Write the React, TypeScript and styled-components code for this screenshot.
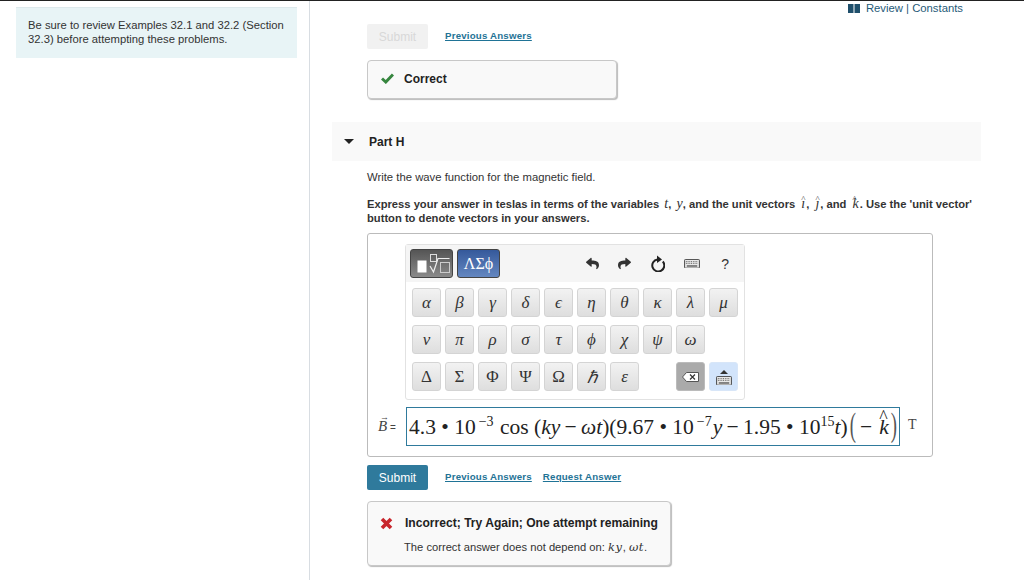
import styled, { createGlobalStyle } from 'styled-components';
import { FaReply, FaShare } from 'react-icons/fa';

const GlobalStyle = createGlobalStyle`
  html, body {
    margin: 0;
    padding: 0;
    background: #fff;
    font-family: "Liberation Sans", Arial, sans-serif;
    color: #222;
  }
  * { box-sizing: border-box; }
`;

const row1 = ['α', 'β', 'γ', 'δ', 'ϵ', 'η', 'θ', 'κ', 'λ', 'μ'];
const row2 = ['ν', 'π', 'ρ', 'σ', 'τ', 'ϕ', 'χ', 'ψ', 'ω'];
const row3 = ['Δ', 'Σ', 'Φ', 'Ψ', 'Ω', 'ℏ', 'ε'];

function KeyboardIcon({ width = 16 }: { width?: number }) {
  return (
    <svg width={width} height={width * 0.6} viewBox="0 0 18 11">
      <rect x="0.5" y="0.5" width="17" height="10" rx="1" fill="#e8e8e8" stroke="#333" />
      <path d="M2 3h14M2 5h14" stroke="#444" strokeWidth="1" strokeDasharray="1 1" />
      <path d="M3 8h12" stroke="#444" strokeWidth="1.4" />
    </svg>
  );
}

function BookIcon() {
  return (
    <svg width="12" height="9" viewBox="0 0 12 9">
      <path d="M0 0h5.5v9H0zM6.5 0H12v9H6.5z" fill="#1f4f6b" />
    </svg>
  );
}

function TemplateIcon() {
  return (
    <svg width="40" height="26" viewBox="0 0 40 26">
      <rect x="5.5" y="9.5" width="9" height="12" fill="#fff" />
      <rect x="18.5" y="3.5" width="6" height="7" fill="none" stroke="#ddd" />
      <path d="M18 15l3.5 6 4.5-13.5h11.5" fill="none" stroke="#eee" strokeWidth="1.2" />
      <rect x="28.5" y="11.5" width="9" height="10" fill="none" stroke="#ccc" />
    </svg>
  );
}

function RefreshIcon() {
  return (
    <svg width="15" height="17" viewBox="0 0 15 17">
      <path d="M12.8 6.5A6 6 0 1 1 7.5 4.5" fill="none" stroke="#222" strokeWidth="2" />
      <path d="M7 0.5L12 4.5L7 8z" fill="#222" />
    </svg>
  );
}

function CheckIcon() {
  return (
    <svg width="13" height="11" viewBox="0 0 13 11">
      <path d="M1 5.5L4.8 9L12 1.5" fill="none" stroke="#36863f" strokeWidth="3" />
    </svg>
  );
}

function CrossIcon() {
  return (
    <svg width="13" height="13" viewBox="0 0 13 13">
      <path d="M2 2L11 11M11 2L2 11" fill="none" stroke="#c8262c" strokeWidth="3.6" />
    </svg>
  );
}

export default function App() {
  return (
    <>
      <GlobalStyle />
      <Page>
        <Sidebar>
          <Note>
            <div>Be sure to review Examples 32.1 and 32.2 (Section</div>
            <div>32.3) before attempting these problems.</div>
          </Note>
        </Sidebar>
        <Main>
          <ReviewBar>
            <BookIcon />
            <span>Review | Constants</span>
          </ReviewBar>
          <Indented>
            <ActionRow>
              <SubmitButton disabled>Submit</SubmitButton>
              <ActionLink href="#">Previous Answers</ActionLink>
            </ActionRow>
            <CorrectBox>
              <CheckIcon />
              <span>Correct</span>
            </CorrectBox>
          </Indented>
          <PartHeader>
            <Caret />
            <span>Part H</span>
          </PartHeader>
          <Indented>
            <Question>Write the wave function for the magnetic field.</Question>
            <Instructions>
              <div>
                Express your answer in teslas in terms of the variables <Var>t</Var>, <Var>y</Var>, and the unit vectors{' '}
                <HatVar>ı</HatVar>, <HatVar>ȷ</HatVar>, and <HatVar>k</HatVar>. Use the 'unit vector'
              </div>
              <div>button to denote vectors in your answers.</div>
            </Instructions>
            <AnswerBox>
              <Palette>
                <PaletteBar>
                  <ModeGroup>
                    <ModeButton $kind="template"><TemplateIcon /></ModeButton>
                    <ModeButton $kind="symbols">ΛΣϕ</ModeButton>
                  </ModeGroup>
                  <ToolGroup>
                    <FaReply size={13} />
                    <FaShare size={13} />
                    <RefreshIcon />
                    <KeyboardIcon />
                    <HelpMark>?</HelpMark>
                  </ToolGroup>
                </PaletteBar>
                <KeyGrid>
                  {row1.map((k) => <Key key={k}>{k}</Key>)}
                  {row2.map((k) => <Key key={k}>{k}</Key>)}
                  <Spacer />
                  {row3.map((k) => <Key key={k} $upright={k !== 'ℏ' && k !== 'ε'}>{k}</Key>)}
                  <Spacer />
                  <DeleteKey>
                    <svg width="17" height="10" viewBox="0 0 17 10">
                      <path d="M0.5 5L4.5 0.5H16.5V9.5H4.5Z" fill="#fff" stroke="#555" />
                      <path d="M8 2.5l5 5M13 2.5l-5 5" stroke="#333" strokeWidth="1.2" />
                    </svg>
                  </DeleteKey>
                  <ShiftKey>
                    <ShiftArrow />
                    <KeyboardIcon />
                  </ShiftKey>
                </KeyGrid>
              </Palette>
              <MathRow>
                <MathLabel>
                  <VecB>B</VecB> =
                </MathLabel>
                <MathInput>
                  4.3 • 10<Sup $gap>−3</Sup>&nbsp;cos (<i>ky</i>&thinsp;−&thinsp;<i>ωt</i>)(9.67 • 10<Sup $gap>−7</Sup><i>y</i>&thinsp;−&thinsp;1.95 • 10<Sup>15</Sup><i>t</i>)
                  <BigParen>(</BigParen>&thinsp;−&thinsp;<HatK>k</HatK><BigParen>)</BigParen>
                </MathInput>
                <Unit>T</Unit>
              </MathRow>
            </AnswerBox>
            <ActionRow $bottom>
              <SubmitButton>Submit</SubmitButton>
              <ActionLink href="#">Previous Answers</ActionLink>
              <ActionLink href="#">Request Answer</ActionLink>
            </ActionRow>
            <IncorrectBox>
              <IncorrectTitle>
                <CrossIcon />
                <span>Incorrect; Try Again; One attempt remaining</span>
              </IncorrectTitle>
              <Hint>
                The correct answer does not depend on: <HintVar>ky</HintVar>, <HintVar>ωt</HintVar>.
              </Hint>
            </IncorrectBox>
          </Indented>
        </Main>
      </Page>
    </>
  );
}

const Page = styled.div`
  width: 1024px;
  height: 580px;
  overflow: hidden;
  display: flex;
  border-top: 1px solid #222;
`;

const Sidebar = styled.aside`
  width: 310px;
  flex: none;
  padding: 6px 12px 0 16px;
  border-right: 1px solid #d8dde2;
`;

const Note = styled.div`
  height: 51px;
  padding: 11px 12px 0;
  background: #e8f4f6;
  border-top: 1px solid #dde9ec;
  font-size: 11.25px;
  line-height: 13.5px;
  color: #333;
  white-space: nowrap;
`;

const Main = styled.main`
  width: 671px;
  padding-left: 22px;
  display: flex;
  flex-direction: column;
`;

const ReviewBar = styled.div`
  height: 23px;
  padding: 1px 18px 0 0;
  display: flex;
  justify-content: flex-end;
  align-items: flex-start;
  gap: 6px;
  font-size: 11.3px;
  line-height: 13px;
  color: #1f5a78;
  svg { margin-top: 2px; }
`;

const Indented = styled.div`
  padding-left: 35px;
  display: flex;
  flex-direction: column;
  align-items: flex-start;
`;

const ActionRow = styled.div<{ $bottom?: boolean }>`
  display: flex;
  align-items: center;
  gap: 11px;
  margin-top: ${(p) => (p.$bottom ? '8px' : '0')};
`;

const SubmitButton = styled.button`
  width: 61px;
  height: 25px;
  margin-right: 6px;
  padding: 0;
  border: none;
  border-radius: 2px;
  font-family: inherit;
  font-size: 12px;
  color: #fff;
  background: #2f7a9c;
  &:disabled {
    background: #f1f1f1;
    color: #d8d8d8;
  }
`;

const ActionLink = styled.a`
  position: relative;
  top: -1px;
  font-size: 9.7px;
  font-weight: 700;
  letter-spacing: 0.2px;
  color: #1f7396;
  text-decoration: underline;
`;

const CorrectBox = styled.div`
  width: 250px;
  height: 39px;
  margin-top: 11px;
  padding: 0 0 2px 13px;
  display: flex;
  align-items: center;
  gap: 10px;
  font-size: 12px;
  font-weight: 700;
  background: #f9f9f9;
  border: 1px solid #c8c8c8;
  border-radius: 4px;
  box-shadow: 1px 1px 1px #bbb;
`;

const PartHeader = styled.div`
  width: 649px;
  height: 39px;
  margin-top: 23px;
  padding-left: 12px;
  display: flex;
  align-items: center;
  gap: 15px;
  font-size: 12px;
  font-weight: 700;
  background: #f9f9f9;
`;

const Caret = styled.span`
  width: 0;
  height: 0;
  border-left: 5px solid transparent;
  border-right: 5px solid transparent;
  border-top: 5px solid #222;
`;

const Question = styled.p`
  margin: 10px 0 0;
  font-size: 11.3px;
  line-height: 13px;
  color: #333;
`;

const Instructions = styled.div`
  margin: 13px 0 0;
  font-size: 11.2px;
  line-height: 14px;
  font-weight: 700;
  color: #333;
  white-space: nowrap;
`;

const Var = styled.span`
  display: inline-block;
  line-height: 12px;
  margin: 0 0 0 2px;
  font-family: "Liberation Serif", serif;
  font-style: italic;
  font-weight: 400;
  font-size: 14px;
`;

const HatVar = styled(Var)`
  position: relative;
  margin: 0 1px 0 3px;
  &::before {
    content: '^';
    position: absolute;
    left: 0;
    top: -5px;
    font-style: normal;
    font-size: 9px;
  }
`;

const AnswerBox = styled.div`
  width: 566px;
  height: 224px;
  margin-top: 8px;
  padding: 10px 0 0 37px;
  border: 1px solid #bbb;
  border-radius: 3px;
`;

const Palette = styled.div`
  width: 340px;
  height: 156px;
  border: 1px solid #e2e2e2;
  border-radius: 3px;
`;

const PaletteBar = styled.div`
  height: 37px;
  padding: 4px 15px 0 4px;
  display: flex;
  justify-content: space-between;
  background: #f5f5f5;
`;

const ModeGroup = styled.div`
  display: flex;
  gap: 4px;
  height: 29px;
`;

const ModeButton = styled.div<{ $kind: 'template' | 'symbols' }>`
  width: 43px;
  display: flex;
  align-items: center;
  justify-content: center;
  border: 1px solid #444;
  border-radius: 3px;
  font-family: "Liberation Serif", serif;
  font-size: 16px;
  color: #fff;
  background: ${(p) =>
    p.$kind === 'template'
      ? 'linear-gradient(#555, #8a8a8a)'
      : 'linear-gradient(#35599b, #6487c0)'};
`;

const ToolGroup = styled.div`
  height: 29px;
  display: flex;
  align-items: center;
  gap: 19px;
  color: #333;
`;

const HelpMark = styled.span`
  margin-left: 2px;
  font-size: 14px;
  color: #333;
`;

const KeyGrid = styled.div`
  padding: 6px 5px 0 6px;
  display: grid;
  grid-template-columns: repeat(10, 29px);
  grid-auto-rows: 29px;
  column-gap: 4px;
  row-gap: 8px;
`;

const Spacer = styled.span``;

const Key = styled.div<{ $upright?: boolean }>`
  display: flex;
  align-items: center;
  justify-content: center;
  border: 1px solid #d4d4d4;
  border-radius: 3px;
  background: linear-gradient(#f2f2f2, #dedede);
  font-family: "Liberation Serif", serif;
  font-style: ${(p) => (p.$upright ? 'normal' : 'italic')};
  font-size: 17px;
  color: #333;
`;

const DeleteKey = styled(Key)`
  grid-column: 9;
  background: #aaa;
  border-color: #bbb;
`;

const ShiftKey = styled(Key)`
  flex-direction: column;
  gap: 2px;
  background: #d2e4fb;
  border-color: #d8e6f8;
  padding-top: 2px;
`;

const ShiftArrow = styled.span`
  width: 0;
  height: 0;
  border-left: 4px solid transparent;
  border-right: 4px solid transparent;
  border-bottom: 4px solid #333;
`;

const MathRow = styled.div`
  margin: 7px 0 0 -37px;
  display: flex;
  align-items: center;
`;

const MathLabel = styled.div`
  width: 38px;
  padding-left: 10px;
  font-size: 10px;
  color: #444;
  white-space: nowrap;
`;

const VecB = styled.span`
  position: relative;
  font-family: "Liberation Serif", serif;
  font-style: italic;
  font-size: 15px;
  &::before {
    content: '→';
    position: absolute;
    left: 2px;
    top: -6px;
    font-size: 9px;
    font-style: normal;
  }
`;

const MathInput = styled.div`
  width: 494px;
  height: 39px;
  padding: 1px 0 0 2px;
  display: flex;
  align-items: center;
  border: 1px solid #2f7a9c;
  font-family: "Liberation Serif", serif;
  font-size: 21.5px;
  color: #222;
  white-space: pre;
  i { font-style: italic; }
`;

const Sup = styled.span<{ $gap?: boolean }>`
  font-size: 14px;
  margin-top: -11px;
  margin-left: ${(p) => (p.$gap ? '3px' : '0')};
  margin-right: ${(p) => (p.$gap ? '1px' : '0')};
`;

const BigParen = styled.span`
  font-size: 34px;
  line-height: 34px;
  margin-top: -4px;
  color: #555;
  transform: scaleX(0.55);
  width: 8px;
  text-align: center;
`;

const HatK = styled.i`
  position: relative;
  margin-left: 3px;
  &::before {
    content: '^';
    position: absolute;
    left: 0;
    top: -8px;
    font-style: normal;
    font-size: 18px;
  }
`;

const Unit = styled.span`
  margin-left: 8px;
  font-family: "Liberation Serif", serif;
  font-size: 14px;
  color: #444;
  margin-top: -3px;
`;

const IncorrectBox = styled.div`
  width: 304px;
  height: 65px;
  margin-top: 11px;
  padding: 14px 12px 0;
  background: #f9f9f9;
  border: 1px solid #c8c8c8;
  border-radius: 4px;
  box-shadow: 1px 1px 1px #bbb;
`;

const IncorrectTitle = styled.div`
  display: flex;
  align-items: center;
  gap: 12px;
  font-size: 12.1px;
  font-weight: 700;
  line-height: 14px;
`;

const Hint = styled.div`
  margin: 10px 0 0 24px;
  font-size: 11.2px;
  line-height: 14px;
  color: #333;
`;

const HintVar = styled.span`
  font-family: "DejaVu Serif", serif;
  font-style: italic;
  font-size: 11.5px;
  letter-spacing: 0.6px;
`;
